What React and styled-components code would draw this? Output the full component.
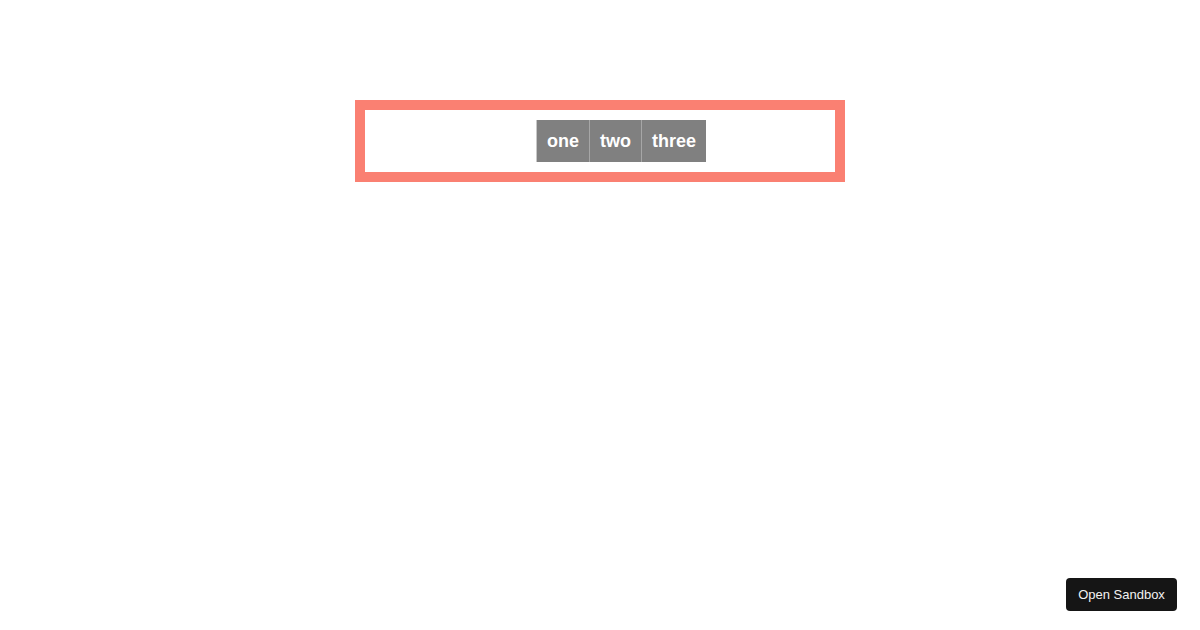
import React from "react";
import styled, { createGlobalStyle } from "styled-components";

const GlobalStyle = createGlobalStyle`
    body {
        margin: 0;
        background: #ffffff;
        font-family: "Liberation Sans", Arial, sans-serif;
    }
`

const Frame = styled.div`
    box-sizing: border-box;
    width: 490px;
    margin: 100px auto 0;
    border: 10px solid salmon;
    padding: 10px 0 10px 42px;
`

const Tabs = styled.ul`
    display: flex;
    justify-content: center;
    list-style: none;
    margin: 0;
    padding: 0;
`

const Tab = styled.li`
    height: 42px;
    display: flex;
    align-items: center;
    padding: 0 10px;
    background: grey;
    color: #ffffff;
    font-size: 18px;
    font-weight: bold;
    border-left: 1px solid ${(p) => (p.$first ? "#c8c8c8" : "#a6a6a6")};
`

const SandboxButton = styled.a`
    position: fixed;
    right: 23px;
    bottom: 19px;
    box-sizing: border-box;
    width: 111px;
    height: 33px;
    display: flex;
    align-items: center;
    justify-content: center;
    background: #151515;
    color: #f2f2f2;
    border-radius: 4px;
    font-family: "Liberation Sans", Arial, sans-serif;
    font-size: 13px;
    text-decoration: none;
`

const App = () => {
    return (
        <>
            <GlobalStyle />
            <Frame>
                <Tabs>
                    <Tab $first>one</Tab>
                    <Tab>two</Tab>
                    <Tab>three</Tab>
                </Tabs>
            </Frame>
            <SandboxButton href="#">Open Sandbox</SandboxButton>
        </>
    )
}

export default App;
